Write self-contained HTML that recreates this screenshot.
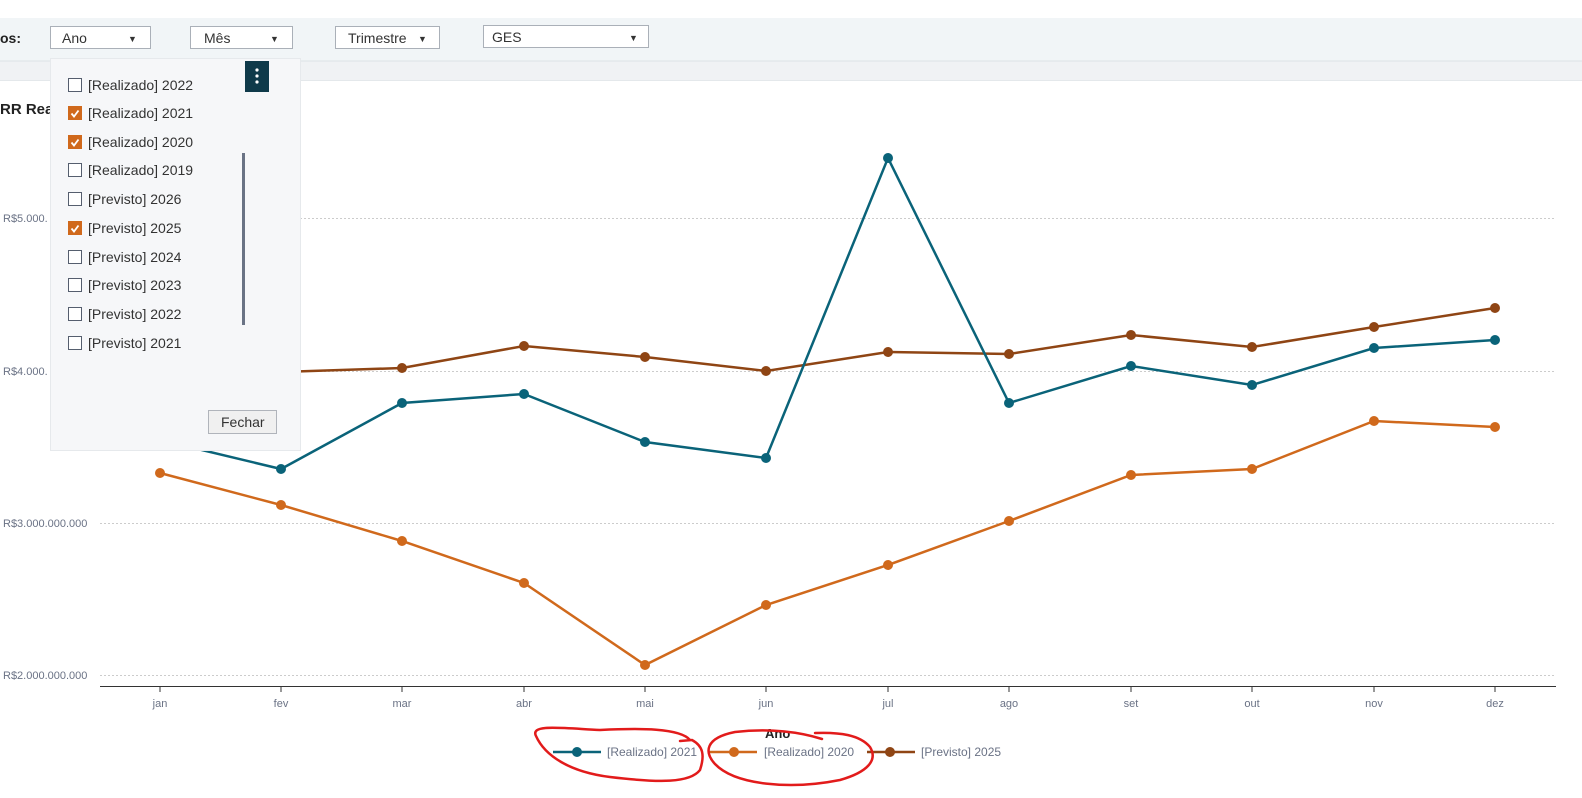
<!DOCTYPE html>
<html><head><meta charset="utf-8"><style>
html,body{margin:0;padding:0;background:#fff;width:1582px;height:798px;overflow:hidden;font-family:"Liberation Sans",sans-serif}
</style></head><body>
<svg width="1582" height="798" xmlns="http://www.w3.org/2000/svg" font-family="Liberation Sans, sans-serif">
<rect x="0" y="0" width="1582" height="798" fill="#fff"/>
<rect x="0" y="18" width="1582" height="43" fill="#f1f5f7"/>
<rect x="0" y="61" width="1582" height="19" fill="#f0f2f4"/>
<line x1="0" y1="61" x2="1582" y2="61" stroke="#dde2e6"/>
<line x1="0" y1="80.5" x2="1582" y2="80.5" stroke="#e4e8eb"/>
<text x="0" y="43" font-size="14" font-weight="bold" fill="#222">os:</text>
<g font-size="14" fill="#333">
<rect x="50.5" y="26.5" width="100" height="22" fill="#fff" stroke="#aab0b8"/><text x="62" y="43">Ano</text><text x="128" y="42" font-size="9">▼</text>
<rect x="190.5" y="26.5" width="102" height="22" fill="#fff" stroke="#aab0b8"/><text x="204" y="43">Mês</text><text x="270" y="42" font-size="9">▼</text>
<rect x="335.5" y="26.5" width="104" height="22" fill="#fff" stroke="#aab0b8"/><text x="348" y="43">Trimestre</text><text x="418" y="42" font-size="9">▼</text>
<rect x="483.5" y="25.5" width="165" height="22" fill="#fff" stroke="#aab0b8"/><text x="492" y="42">GES</text><text x="629" y="41" font-size="9">▼</text>
</g>
<text x="0" y="114" font-size="15" font-weight="bold" fill="#222">RR Rea</text>
<!-- grid -->
<g stroke="#ccc" stroke-dasharray="2,2">
<line x1="100" y1="218.5" x2="1556" y2="218.5"/>
<line x1="100" y1="371.5" x2="1556" y2="371.5"/>
<line x1="100" y1="523.5" x2="1556" y2="523.5"/>
<line x1="100" y1="675.5" x2="1556" y2="675.5"/>
</g>
<g font-size="11" fill="#6a7285">
<text x="3" y="222">R$5.000.</text>
<text x="3" y="375">R$4.000.</text>
<text x="3" y="527">R$3.000.000.000</text>
<text x="3" y="679">R$2.000.000.000</text>
</g>
<line x1="100" y1="686.5" x2="1556" y2="686.5" stroke="#333"/>
<g stroke="#333"><line x1="160" y1="686" x2="160" y2="692"/><line x1="281" y1="686" x2="281" y2="692"/><line x1="402" y1="686" x2="402" y2="692"/><line x1="524" y1="686" x2="524" y2="692"/><line x1="645" y1="686" x2="645" y2="692"/><line x1="766" y1="686" x2="766" y2="692"/><line x1="888" y1="686" x2="888" y2="692"/><line x1="1009" y1="686" x2="1009" y2="692"/><line x1="1131" y1="686" x2="1131" y2="692"/><line x1="1252" y1="686" x2="1252" y2="692"/><line x1="1374" y1="686" x2="1374" y2="692"/><line x1="1495" y1="686" x2="1495" y2="692"/></g>
<g font-size="11" fill="#6a7285" text-anchor="middle">
<text x="160" y="707">jan</text><text x="281" y="707">fev</text><text x="402" y="707">mar</text><text x="524" y="707">abr</text><text x="645" y="707">mai</text><text x="766" y="707">jun</text><text x="888" y="707">jul</text><text x="1009" y="707">ago</text><text x="1131" y="707">set</text><text x="1252" y="707">out</text><text x="1374" y="707">nov</text><text x="1495" y="707">dez</text>
</g>
<!-- lines -->
<g fill="none" stroke-width="2.5">
<polyline stroke="#8f4514" points="160,372 281,372 402,368 524,346 645,357 766,371 888,352 1009,354 1131,335 1252,347 1374,327 1495,308"/>
<polyline stroke="#0a6379" points="160,440 281,469 402,403 524,394 645,442 766,458 888,158 1009,403 1131,366 1252,385 1374,348 1495,340"/>
<polyline stroke="#d0691c" points="160,473 281,505 402,541 524,583 645,665 766,605 888,565 1009,521 1131,475 1252,469 1374,421 1495,427"/>
</g>
<g fill="#8f4514"><circle cx="402" cy="368" r="5"/><circle cx="524" cy="346" r="5"/><circle cx="645" cy="357" r="5"/><circle cx="766" cy="371" r="5"/><circle cx="888" cy="352" r="5"/><circle cx="1009" cy="354" r="5"/><circle cx="1131" cy="335" r="5"/><circle cx="1252" cy="347" r="5"/><circle cx="1374" cy="327" r="5"/><circle cx="1495" cy="308" r="5"/></g>
<g fill="#0a6379"><circle cx="281" cy="469" r="5"/><circle cx="402" cy="403" r="5"/><circle cx="524" cy="394" r="5"/><circle cx="645" cy="442" r="5"/><circle cx="766" cy="458" r="5"/><circle cx="888" cy="158" r="5"/><circle cx="1009" cy="403" r="5"/><circle cx="1131" cy="366" r="5"/><circle cx="1252" cy="385" r="5"/><circle cx="1374" cy="348" r="5"/><circle cx="1495" cy="340" r="5"/></g>
<g fill="#d0691c"><circle cx="160" cy="473" r="5"/><circle cx="281" cy="505" r="5"/><circle cx="402" cy="541" r="5"/><circle cx="524" cy="583" r="5"/><circle cx="645" cy="665" r="5"/><circle cx="766" cy="605" r="5"/><circle cx="888" cy="565" r="5"/><circle cx="1009" cy="521" r="5"/><circle cx="1131" cy="475" r="5"/><circle cx="1252" cy="469" r="5"/><circle cx="1374" cy="421" r="5"/><circle cx="1495" cy="427" r="5"/></g>
<!-- dropdown panel -->
<rect x="50.5" y="58.5" width="250" height="392" fill="#f6f7f9" stroke="#e6e9ec"/>
<rect x="245" y="61" width="24" height="31" fill="#0f3a4a"/>
<g fill="#fff"><circle cx="257" cy="70" r="1.6"/><circle cx="257" cy="76" r="1.6"/><circle cx="257" cy="82" r="1.6"/></g>
<rect x="242" y="153" width="3" height="172" fill="#6a7385"/>
<g font-size="14" fill="#333">
<rect x="68.5" y="78.5" width="13" height="13" fill="#fff" stroke="#555e6e"/><text x="88" y="90">[Realizado] 2022</text>
<rect x="68" y="106" width="14" height="14" fill="#d0691c"/><path d="M71.5 113.5l2.5 3 4.5-6" stroke="#fff" stroke-width="1.8" fill="none"/><text x="88" y="118">[Realizado] 2021</text>
<rect x="68" y="135" width="14" height="14" fill="#d0691c"/><path d="M71.5 142.5l2.5 3 4.5-6" stroke="#fff" stroke-width="1.8" fill="none"/><text x="88" y="147">[Realizado] 2020</text>
<rect x="68.5" y="163.5" width="13" height="13" fill="#fff" stroke="#555e6e"/><text x="88" y="175">[Realizado] 2019</text>
<rect x="68.5" y="192.5" width="13" height="13" fill="#fff" stroke="#555e6e"/><text x="88" y="204">[Previsto] 2026</text>
<rect x="68" y="221" width="14" height="14" fill="#d0691c"/><path d="M71.5 228.5l2.5 3 4.5-6" stroke="#fff" stroke-width="1.8" fill="none"/><text x="88" y="233">[Previsto] 2025</text>
<rect x="68.5" y="250.5" width="13" height="13" fill="#fff" stroke="#555e6e"/><text x="88" y="262">[Previsto] 2024</text>
<rect x="68.5" y="278.5" width="13" height="13" fill="#fff" stroke="#555e6e"/><text x="88" y="290">[Previsto] 2023</text>
<rect x="68.5" y="307.5" width="13" height="13" fill="#fff" stroke="#555e6e"/><text x="88" y="319">[Previsto] 2022</text>
<rect x="68.5" y="336.5" width="13" height="13" fill="#fff" stroke="#555e6e"/><text x="88" y="348">[Previsto] 2021</text>
<rect x="208.5" y="410.5" width="68" height="23" fill="#f0f0f0" stroke="#b0b4bb"/><text x="221" y="427">Fechar</text>
</g>
<!-- legend -->
<text x="765" y="738" font-size="13" font-weight="bold" fill="#222">Ano</text>
<g stroke-width="2.5">
<line x1="553" y1="752" x2="601" y2="752" stroke="#0a6379"/><circle cx="577" cy="752" r="5" fill="#0a6379"/>
<line x1="709" y1="752" x2="757" y2="752" stroke="#d0691c"/><circle cx="734" cy="752" r="5" fill="#d0691c"/>
<line x1="867" y1="752" x2="915" y2="752" stroke="#8f4514"/><circle cx="890" cy="752" r="5" fill="#8f4514"/>
</g>
<g font-size="12" fill="#6a7285">
<text x="607" y="756">[Realizado] 2021</text><text x="764" y="756">[Realizado] 2020</text><text x="921" y="756">[Previsto] 2025</text>
</g>
<!-- red annotations -->
<g fill="none" stroke="#e21b1b" stroke-width="2.5" stroke-linecap="round">
<path d="M690 740 C680 728 640 728 600 730 C560 728 530 724 536 736 C545 756 570 772 610 777 C660 783 690 783 700 770 C705 755 703 746 692 740 L680 741"/>
<path d="M822 739 C800 732 770 728 735 732 C705 738 704 752 715 764 C735 785 790 790 840 780 C868 772 878 760 870 747 C860 735 840 732 815 733"/>
</g>
</svg>
</body></html>
